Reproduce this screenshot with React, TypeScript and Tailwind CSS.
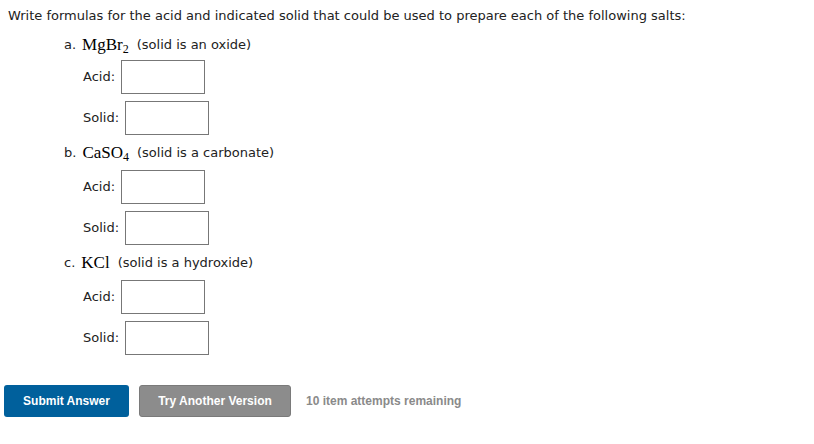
const parts = [
  { letter: 'a.', formula: ['MgBr', '2'], note: '(solid is an oxide)', titleGap: 'mt-[11px]', rowGap: 'mt-[5px]' },
  { letter: 'b.', formula: ['CaSO', '4'], note: '(solid is a carbonate)', titleGap: 'mt-[8px]', rowGap: 'mt-[7px]' },
  { letter: 'c.', formula: ['KCl', ''], note: '(solid is a hydroxide)', titleGap: 'mt-[8px]', rowGap: 'mt-[7px]' },
];

function Field({ label, className }: { label: string; className: string }) {
  return (
    <div className={`flex items-center h-[34px] gap-[6px] leading-[16px] ${className}`}>
      <span>{label}</span>
      <input
        type="text"
        className="block box-border w-[84px] h-[34px] p-0 border border-[#777] bg-white outline-none"
      />
    </div>
  );
}

export default function App() {
  return (
    <div className="min-h-screen bg-white px-[4px] pt-[8px] text-[13px] text-[#222] font-['DejaVu_Sans',Verdana,sans-serif]">
      <p className="ml-[4px] leading-[16px]">
        Write formulas for the acid and indicated solid that could be used to prepare each of the following salts:
      </p>

      {parts.map((p) => (
        <div key={p.letter} className="ml-[60px]">
          <div className={`flex items-center h-[20px] leading-[20px] gap-[6px] ${p.titleGap}`}>
            <span>{p.letter}</span>
            <span className="font-['Liberation_Serif',serif] text-[17px] text-black">
              {p.formula[0]}
              {p.formula[1] && (
                <span className="text-[12px] relative top-[3px] leading-none">{p.formula[1]}</span>
              )}
            </span>
            <span className="ml-[2px]">{p.note}</span>
          </div>
          <div className="ml-[19px]">
            <Field label="Acid:" className={p.rowGap} />
            <Field label="Solid:" className="mt-[7px]" />
          </div>
        </div>
      ))}

      <div className="flex items-center mt-[30px] font-['Liberation_Sans',Arial,sans-serif] text-[12px] font-bold">
        <button className="w-[125px] h-[32px] rounded-[3px] bg-[#00609c] text-white">
          Submit Answer
        </button>
        <button className="w-[152px] h-[32px] ml-[10px] rounded-[3px] bg-[#8c8c8c] border border-[#7a7a7a] text-white">
          Try Another Version
        </button>
        <span className="ml-[15px] text-[#8a8a8a]">10 item attempts remaining</span>
      </div>
    </div>
  );
}
